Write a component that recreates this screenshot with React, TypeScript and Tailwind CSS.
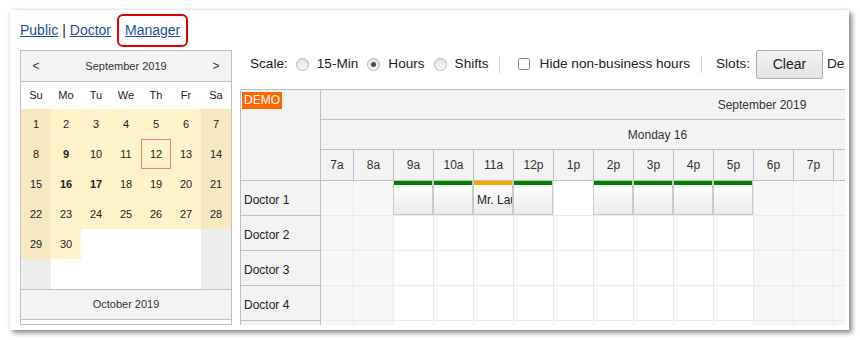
const hours = ["7a", "8a", "9a", "10a", "11a", "12p", "1p", "2p", "3p", "4p", "5p", "6p", "7p", "8p"];
const doctors = ["Doctor 1", "Doctor 2", "Doctor 3", "Doctor 4", ""];

// slots for Doctor 1, keyed by hour index
const slots: Record<number, { color: string; text?: string }> = {
  2: { color: "bg-[#008000]" },
  3: { color: "bg-[#008000]" },
  4: { color: "bg-[#ffa500]", text: "Mr. Laurence" },
  5: { color: "bg-[#008000]" },
  7: { color: "bg-[#008000]" },
  8: { color: "bg-[#008000]" },
  9: { color: "bg-[#008000]" },
  10: { color: "bg-[#008000]" },
};

const isBusiness = (i: number) => i >= 2 && i <= 10;

function Radio({ checked }: { checked?: boolean }) {
  return (
    <span className="w-[13px] h-[13px] rounded-full border border-[#b4b4b4] bg-linear-to-b from-[#e2e2e2] to-[#f8f8f8] flex items-center justify-center">
      {checked && <span className="w-[5px] h-[5px] rounded-full bg-[#4a4a4a]" />}
    </span>
  );
}

function Navigator() {
  const days: (number | null)[] = [];
  for (let d = 1; d <= 30; d++) days.push(d);
  while (days.length < 42) days.push(null);
  const rows = [0, 1, 2, 3, 4, 5].map((r) => days.slice(r * 7, r * 7 + 7));

  return (
    <div className="w-[212px] shrink-0 border border-[#c0c0c0] text-[11px] text-[#222]">
      {/* title */}
      <div className="h-[31px] flex items-center bg-[#f3f3f3] border-b border-[#c0c0c0] text-[#333]">
        <span className="w-[30px] text-center text-[12px]">&lt;</span>
        <span className="flex-1 text-center">September 2019</span>
        <span className="w-[30px] text-center text-[12px]">&gt;</span>
      </div>
      {/* day names */}
      <div className="h-[27px] flex items-center">
        {["Su", "Mo", "Tu", "We", "Th", "Fr", "Sa"].map((d) => (
          <span key={d} className="w-[30px] text-center">
            {d}
          </span>
        ))}
      </div>
      {rows.map((row, r) => (
        <div key={r} className="flex h-[30px]">
          {row.map((d, c) => {
            const weekend = c === 0 || c === 6;
            let bg = "bg-white";
            if (d && weekend) bg = "bg-[#f6e9c2]";
            else if (d) bg = "bg-[#fff3cc]";
            else if (weekend) bg = "bg-[#eeeeee]";
            const bold = d === 9 || d === 16 || d === 17;
            const today = d === 12;
            return (
              <div
                key={c}
                className={`w-[30px] h-[30px] flex items-center justify-center ${bg} ${bold ? "font-bold" : ""} ${
                  today ? "border border-[#f08080]" : ""
                }`}
              >
                {d}
              </div>
            );
          })}
        </div>
      ))}
      <div className="h-[31px] flex items-center justify-center bg-[#f3f3f3] border-y border-[#c0c0c0] text-[#333]">
        October 2019
      </div>
      <div className="h-[20px]" />
    </div>
  );
}

function Toolbar() {
  return (
    <div className="h-[39px] shrink-0 overflow-hidden">
      <div className="h-[30px] mt-[-1px] flex items-center text-[13.6px] text-[#222] whitespace-nowrap [&>*]:shrink-0">
        <span className="ml-[10px]">Scale:</span>
        <span className="ml-[8px]">
          <Radio />
        </span>
        <span className="ml-[8px]">15-Min</span>
        <span className="ml-[9px]">
          <Radio checked />
        </span>
        <span className="ml-[8px]">Hours</span>
        <span className="ml-[9px]">
          <Radio />
        </span>
        <span className="ml-[8px]">Shifts</span>
        <span className="ml-[10px] w-px h-[17px] bg-[#d0d0d0]" />
        <span className="ml-[18px] w-[12px] h-[12px] rounded-[2px] border border-[#8a8a8a] bg-white" />
        <span className="ml-[10px]">Hide non-business hours</span>
        <span className="ml-[11px] w-px h-[17px] bg-[#d0d0d0]" />
        <span className="ml-[14px]">Slots:</span>
        <button className="ml-[6px] w-[67px] h-[29px] border border-[#adadad] rounded-[2px] bg-linear-to-b from-[#f2f2f2] to-[#e4e4e4] text-[14px] text-[#222]">
          Clear
        </button>
        <span className="ml-[4px]">Delete</span>
      </div>
    </div>
  );
}

function Scheduler() {
  return (
    <div className="flex-1 overflow-hidden border-l border-t border-[#c0c0c0] flex text-[12px] text-[#333]">
      {/* row headers */}
      <div className="w-[80px] shrink-0 border-r border-[#c0c0c0] bg-[#f3f3f3]">
        <div className="h-[91px] border-b border-[#c0c0c0] pt-px pl-[1px]">
          <span className="inline-block bg-[#ff6600] text-white px-[2px] h-[17px] leading-[17px] text-[12px]">DEMO</span>
        </div>
        {doctors.map((d, r) => (
          <div key={r} className="h-[35px] border-b border-[#c0c0c0] flex items-center pt-[3px] pl-[3px] text-[#222]">
            {d}
          </div>
        ))}
      </div>
      {/* timeline */}
      <div className="flex-1 overflow-hidden">
        <div className="h-[30px] border-b border-[#c0c0c0] bg-[#f3f3f3] flex items-center whitespace-nowrap">
          <span className="w-[882px] shrink-0 text-center">September 2019</span>
        </div>
        <div className="h-[30px] border-b border-[#c0c0c0] bg-[#f3f3f3] flex items-center whitespace-nowrap">
          <span className="w-[673px] shrink-0 text-center">Monday 16</span>
        </div>
        <div className="h-[31px] border-b border-[#c0c0c0] bg-[#f3f3f3] flex">
          {hours.map((h, i) => (
            <div
              key={h}
              className={`${i === 0 ? "w-[33px]" : "w-[40px]"} shrink-0 border-r border-[#c0c0c0] flex items-center justify-center`}
            >
              {h}
            </div>
          ))}
        </div>
        {doctors.map((d, r) => (
          <div key={r} className="h-[35px] flex">
            {hours.map((h, i) => {
              const slot = r === 0 ? slots[i] : undefined;
              const bg = isBusiness(i) ? "bg-white" : "bg-[#f7f7f7]";
              return (
                <div
                  key={h}
                  className={`${i === 0 ? "w-[33px]" : "w-[40px]"} shrink-0 border-r border-b border-[#eaeaea] ${bg} flex flex-col`}
                >
                  {slot && (
                    <div className="flex-1 flex flex-col ml-[-1px] border-l border-r border-b border-[#c8c8c8]">
                      <div className={`h-[4px] ${slot.color}`} />
                      <div className="flex-1 bg-linear-to-b from-white to-[#ebebeb] flex items-center pl-[3px] overflow-hidden whitespace-nowrap text-[#222]">
                        {slot.text}
                      </div>
                    </div>
                  )}
                </div>
              );
            })}
          </div>
        ))}
      </div>
    </div>
  );
}

export default function App() {
  return (
    <div className="w-[860px] h-[340px] bg-white pt-[10px] pl-[10px] font-['Liberation_Sans',Arial,sans-serif]">
      <div className="w-[839px] h-[320px] bg-white shadow-[3px_3px_5px_rgba(0,0,0,0.45),0_0_4px_rgba(0,0,0,0.12)] flex flex-col overflow-hidden">
        {/* links */}
        <div className="h-[40px] shrink-0 flex items-center pl-[10px] text-[14px]">
          <a className="text-[#1d4f9c] underline">Public</a>
          <span className="mx-[4px] text-[#222]">|</span>
          <a className="text-[#1d4f9c] underline">Doctor</a>
          <span className="ml-[6px] px-[6px] h-[33px] flex items-center border-2 border-[#e00000] rounded-[6px]">
            <a className="text-[#1d4f9c] underline">Manager</a>
          </span>
        </div>
        {/* main */}
        <div className="h-[275px] shrink-0 flex pl-[10px] overflow-hidden">
          <Navigator />
          <div className="ml-[8px] w-[605px] shrink-0 flex flex-col">
            <Toolbar />
            <Scheduler />
          </div>
        </div>
      </div>
    </div>
  );
}
